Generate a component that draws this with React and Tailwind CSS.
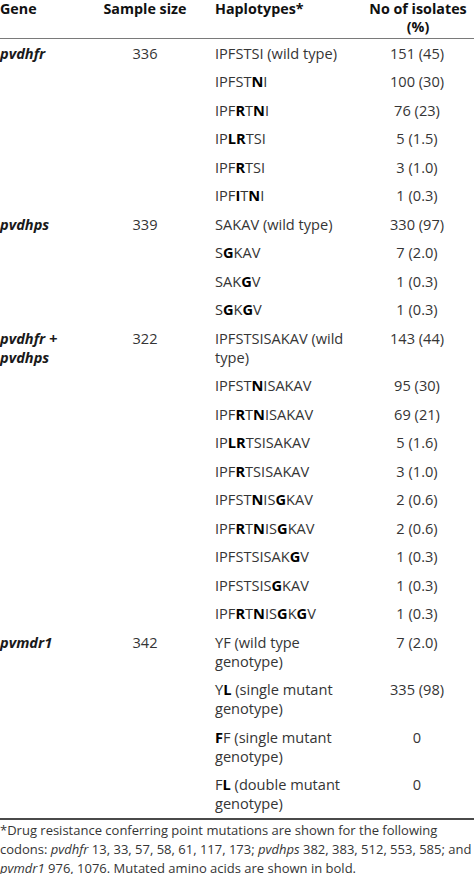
const groups = [
  {
    gene: "pvdhfr",
    size: "336",
    rows: [
      ["IPFSTSI (wild type)", "151 (45)"],
      ["IPFST[N]I", "100 (30)"],
      ["IPF[R]T[N]I", "76 (23)"],
      ["IP[LR]TSI", "5 (1.5)"],
      ["IPF[R]TSI", "3 (1.0)"],
      ["IPF[I]T[N]I", "1 (0.3)"],
    ],
  },
  {
    gene: "pvdhps",
    size: "339",
    rows: [
      ["SAKAV (wild type)", "330 (97)"],
      ["S[G]KAV", "7 (2.0)"],
      ["SAK[G]V", "1 (0.3)"],
      ["S[G]K[G]V", "1 (0.3)"],
    ],
  },
  {
    gene: "pvdhfr + pvdhps",
    size: "322",
    rows: [
      ["IPFSTSISAKAV (wild type)", "143 (44)"],
      ["IPFST[N]ISAKAV", "95 (30)"],
      ["IPF[R]T[N]ISAKAV", "69 (21)"],
      ["IP[LR]TSISAKAV", "5 (1.6)"],
      ["IPF[R]TSISAKAV", "3 (1.0)"],
      ["IPFST[N]IS[G]KAV", "2 (0.6)"],
      ["IPF[R]T[N]IS[G]KAV", "2 (0.6)"],
      ["IPFSTSISAK[G]V", "1 (0.3)"],
      ["IPFSTSIS[G]KAV", "1 (0.3)"],
      ["IPF[R]T[N]IS[G]K[G]V", "1 (0.3)"],
    ],
  },
  {
    gene: "pvmdr1",
    size: "342",
    rows: [
      ["YF (wild type genotype)", "7 (2.0)"],
      ["Y[L] (single mutant genotype)", "335 (98)"],
      ["[F]F (single mutant genotype)", "0"],
      ["F[L] (double mutant genotype)", "0"],
    ],
  },
];

// "IPF[R]TSI" -> bold for bracketed letters
const Haplotype = ({ text }) => {
  const parts = text.split(/(\[[^\]]+\])/).filter(Boolean);
  return (
    <>
      {parts.map((p, i) =>
        p.startsWith("[") ? (
          <b key={i} className="font-bold text-black">
            {p.slice(1, -1)}
          </b>
        ) : (
          <span key={i}>{p}</span>
        )
      )}
    </>
  );
};

const cols = "grid grid-cols-[100px_90px_170px_114px]";

const App = () => {
  return (
    <div
      className="w-[474px] h-[874px] overflow-hidden bg-white text-[#353535]"
      style={{ fontFamily: '"Open Sans", "Liberation Sans", sans-serif' }}>
      {/* Header */}
      <div
        className={`${cols} text-[14.3px] leading-[18px] font-bold text-[#111] pb-[2px] border-b border-[#7a7a7a]`}>
        <div>Gene</div>
        <div className="text-center">Sample size</div>
        <div className="pl-[25px]">Haplotypes*</div>
        <div className="text-center pl-[2px]">
          No of isolates
          <br />
          (%)
        </div>
      </div>

      {/* Body */}
      <div className="text-[14.6px] leading-[19px]">
        {groups.map((g) =>
          g.rows.map(([hap, iso], i) => (
            <div key={g.gene + i} className={`${cols} py-[4.75px]`}>
              <div className="pr-[10px] font-bold italic text-[#1a1a1a]">
                {i === 0 ? g.gene : ""}
              </div>
              <div className="text-center">{i === 0 ? g.size : ""}</div>
              <div className="pl-[25px] pr-[8px]">
                <Haplotype text={hap} />
              </div>
              <div className="text-center">{iso}</div>
            </div>
          ))
        )}
      </div>

      {/* Footnote */}
      <div className="border-t-2 border-[#4a4a4a] pt-[1px] text-[13px] leading-[19px] whitespace-nowrap">
        *Drug resistance conferring point mutations are shown for the following
        <br />
        codons: <i>pvdhfr</i> 13, 33, 57, 58, 61, 117, 173; <i>pvdhps</i> 382,
        383, 512, 553, 585; and
        <br />
        <i>pvmdr1</i> 976, 1076. Mutated amino acids are shown in bold.
      </div>
    </div>
  );
};

export default App;
